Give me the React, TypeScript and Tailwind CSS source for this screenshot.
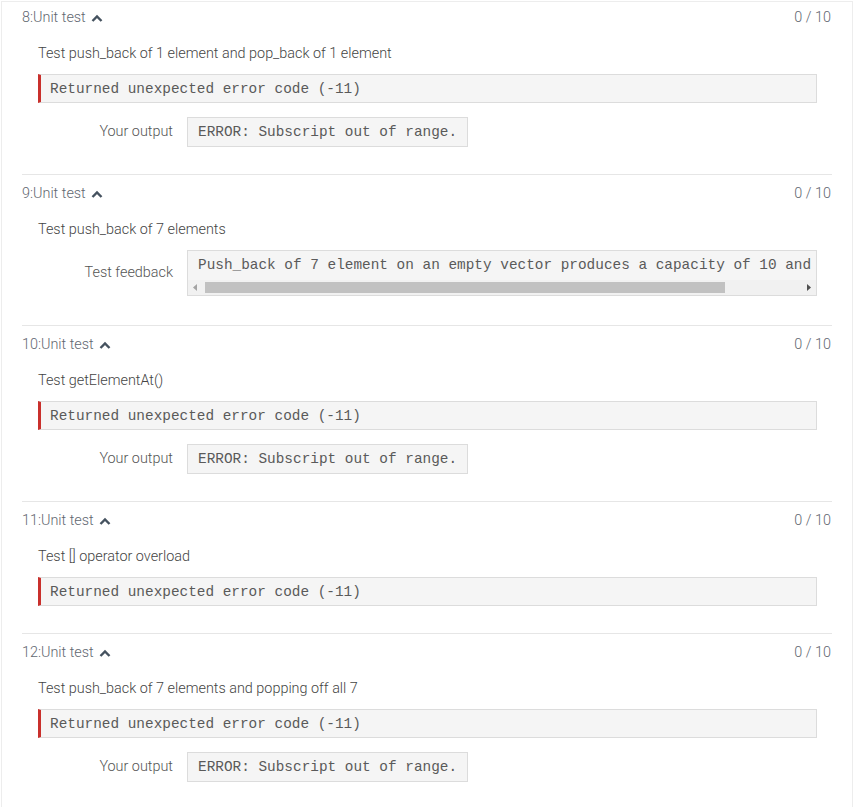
import React from 'react';

type Row =
  | { kind: 'error'; text: string }
  | { kind: 'output'; label: string; text: string }
  | { kind: 'feedback'; label: string; text: string };

type Test = { id: number; desc: string; rows: Row[] };

const ERR = 'Returned unexpected error code (-11)';
const OUT = 'ERROR: Subscript out of range.';

const tests: Test[] = [
  {
    id: 8,
    desc: 'Test push_back of 1 element and pop_back of 1 element',
    rows: [
      { kind: 'error', text: ERR },
      { kind: 'output', label: 'Your output', text: OUT },
    ],
  },
  {
    id: 9,
    desc: 'Test push_back of 7 elements',
    rows: [
      {
        kind: 'feedback',
        label: 'Test feedback',
        text: 'Push_back of 7 element on an empty vector produces a capacity of 10 and',
      },
    ],
  },
  {
    id: 10,
    desc: 'Test getElementAt()',
    rows: [
      { kind: 'error', text: ERR },
      { kind: 'output', label: 'Your output', text: OUT },
    ],
  },
  {
    id: 11,
    desc: 'Test [] operator overload',
    rows: [{ kind: 'error', text: ERR }],
  },
  {
    id: 12,
    desc: 'Test push_back of 7 elements and popping off all 7',
    rows: [
      { kind: 'error', text: ERR },
      { kind: 'output', label: 'Your output', text: OUT },
    ],
  },
];

const mono = { fontFamily: '"Liberation Mono", "Courier New", monospace' };

function Chevron() {
  return (
    <svg width="12" height="9" viewBox="0 0 12 9" className="ml-[5px]">
      <path d="M1.5 7 L6 2.5 L10.5 7" fill="none" stroke="#45525f" strokeWidth="2.4" />
    </svg>
  );
}

function TestRow({ row, first }: { row: Row; first: boolean }) {
  if (row.kind === 'error') {
    return (
      <div
        className={`${first ? 'mt-[10px]' : 'mt-[14px]'} border border-[#dcdcdc] border-l-[3px] border-l-[#c9302c] bg-[#f5f5f5] pl-[9px] pt-[6px] pb-[4px] text-[14.4px] leading-[17px] text-[#5a5a5a] whitespace-pre`}
        style={mono}
      >
        {row.text}
      </div>
    );
  }
  if (row.kind === 'output') {
    return (
      <div className={`${first ? 'mt-[10px]' : 'mt-[14px]'} flex items-center gap-[14px]`}>
        <div className="w-[135px] text-right text-[#555]">{row.label}</div>
        <div
          className="border border-[#dcdcdc] bg-[#f5f5f5] px-[10px] py-[5px] text-[14.4px] leading-[18px] text-[#5a5a5a] whitespace-pre"
          style={mono}
        >
          {row.text}
        </div>
      </div>
    );
  }
  return (
    <div className="mt-[10px] mb-[2px] flex items-center gap-[14px]">
      <div className="w-[135px] shrink-0 text-right text-[#555]">{row.label}</div>
      <div className="flex-1 min-w-0 border border-[#dcdcdc] bg-[#f5f5f5]">
        <div
          className="overflow-hidden whitespace-pre pl-[10px] pt-[6px] pb-[6px] text-[14.4px] leading-[17px] text-[#5a5a5a]"
          style={mono}
        >
          {row.text}
        </div>
        <div className="flex h-[15px] items-center bg-[#f1f1f1]">
          <div className="flex w-[15px] items-center justify-center">
            <svg width="5" height="7" viewBox="0 0 5 7">
              <path d="M4 0 L0 3.5 L4 7 Z" fill="#a3a3a3" />
            </svg>
          </div>
          <div className="flex-1 h-full flex items-center">
            <div className="ml-[2px] h-[11px] w-[87%] bg-[#c1c1c1]" />
          </div>
          <div className="flex w-[15px] items-center justify-center">
            <svg width="5" height="7" viewBox="0 0 5 7">
              <path d="M1 0 L5 3.5 L1 7 Z" fill="#505050" />
            </svg>
          </div>
        </div>
      </div>
    </div>
  );
}

export default function App() {
  return (
    <div
      className="min-h-screen bg-white pt-px pl-px pr-[3px] text-[14.4px] font-light"
      style={{ fontFamily: 'Roboto, "Noto Sans", Arial, sans-serif' }}
    >
      <div className="min-h-[806px] border border-b-0 border-[#ededed] px-5">
        {tests.map((t, i) => (
          <section
            key={t.id}
            className={`${i === 0 ? 'pt-[6px]' : 'pt-[9px] border-t border-[#e6e6e6]'} pb-[27px]`}
          >
            <div className="flex h-5 items-center justify-between leading-5 text-[#5f6770]">
              <div className="flex items-center">
                <span>{t.id}:Unit test</span>
                <Chevron />
              </div>
              <span className="pr-px">0 / 10</span>
            </div>
            <div className="pl-4 pr-[15px]">
              <div className="mt-4 h-5 leading-5 text-[#444]">{t.desc}</div>
              {t.rows.map((r, j) => (
                <TestRow key={j} row={r} first={j === 0} />
              ))}
            </div>
          </section>
        ))}
      </div>
    </div>
  );
}
